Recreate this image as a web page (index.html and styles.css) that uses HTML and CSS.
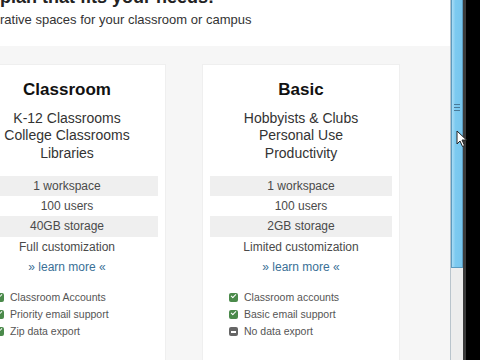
FILE: index.html
```html
<!DOCTYPE html>
<html>
<head>
<meta charset="utf-8">
<link rel="stylesheet" href="styles.css">
</head>
<body>
<div class="page">
  <header class="hero">
    <h1 class="hero-title">plan that fits your needs:</h1>
    <p class="hero-sub">rative spaces for your classroom or campus</p>
  </header>
  <div class="plans">
    <section class="card">
      <h2 class="card-title">Classroom</h2>
      <div class="card-for">K-12 Classrooms<br>College Classrooms<br>Libraries</div>
      <ul class="specs">
        <li class="stripe">1 workspace</li>
        <li>100 users</li>
        <li class="stripe">40GB storage</li>
        <li>Full customization</li>
        <li class="more">» learn more «</li>
      </ul>
      <ul class="feats">
        <li><span class="ck on"></span>Classroom Accounts</li>
        <li><span class="ck on"></span>Priority email support</li>
        <li><span class="ck on"></span>Zip data export</li>
      </ul>
    </section>
    <section class="card">
      <h2 class="card-title">Basic</h2>
      <div class="card-for">Hobbyists &amp; Clubs<br>Personal Use<br>Productivity</div>
      <ul class="specs">
        <li class="stripe">1 workspace</li>
        <li>100 users</li>
        <li class="stripe">2GB storage</li>
        <li>Limited customization</li>
        <li class="more">» learn more «</li>
      </ul>
      <ul class="feats">
        <li><span class="ck on"></span>Classroom accounts</li>
        <li><span class="ck on"></span>Basic email support</li>
        <li><span class="ck off"></span>No data export</li>
      </ul>
    </section>
  </div>
</div>
<div class="scrollbar">
  <div class="track">
    <div class="thumb"><span class="grip"></span></div>
  </div>
  <div class="edge"></div>
  <div class="frame"></div>
</div>
<svg class="cursor" width="12" height="18" viewBox="0 0 12 18"><path d="M1 1 L1 14 L4 11 L6.5 16.5 L8.5 15.5 L6 10 L10.5 10 Z" fill="#fff" stroke="#222" stroke-width="1"/></svg>
</body>
</html>
```
FILE: styles.css
```css
html, body {
  margin: 0;
  padding: 0;
}
body {
  width: 480px;
  height: 360px;
  overflow: hidden;
  display: flex;
  position: relative;
  font-family: "Liberation Sans", Arial, sans-serif;
  background: #000;
}
.page {
  width: 450px;
  flex: none;
  background: #f6f6f6;
  overflow: hidden;
}
.hero {
  background: #fff;
  height: 46px;
  overflow: hidden;
}
.hero-title {
  margin: -14px 0 0 0;
  font-size: 18px;
  line-height: 22px;
  font-weight: bold;
  color: #222;
  white-space: nowrap;
}
.hero-sub {
  margin: 4px 0 0 0;
  font-size: 13px;
  line-height: 16px;
  color: #333;
  white-space: nowrap;
}
.plans {
  display: flex;
  gap: 36px;
  margin: 18px 0 0 -32px;
}
.card {
  width: 196px;
  height: 320px;
  flex: none;
  background: #fff;
  border: 1px solid #efefef;
  box-sizing: content-box;
  padding: 15px 0 0 0;
  text-align: center;
}
.card-title {
  margin: 0;
  font-size: 17px;
  line-height: 20px;
  font-weight: bold;
  color: #111;
}
.card-for {
  margin-top: 10px;
  font-size: 14px;
  line-height: 17.3px;
  color: #333;
}
.specs {
  list-style: none;
  margin: 14px 7px 0 7px;
  padding: 0;
  font-size: 12px;
  line-height: 20.3px;
  color: #4a4a4a;
}
.specs .stripe {
  background: #efefef;
}
.specs .more {
  color: #3a7096;
}
.feats {
  list-style: none;
  margin: 12px 0 0 26px;
  padding: 0;
  text-align: left;
  font-size: 10.5px;
  line-height: 17px;
  color: #555;
}
.feats li {
  display: flex;
  align-items: center;
  gap: 6px;
}
.ck {
  width: 9px;
  height: 9px;
  border-radius: 2px;
  flex: none;
  position: relative;
}
.ck.on {
  background: #4b8a4b;
}
.ck.on::after {
  content: "";
  position: absolute;
  left: 2px;
  top: 1px;
  width: 4px;
  height: 2px;
  border-left: 1.5px solid #fff;
  border-bottom: 1.5px solid #fff;
  transform: rotate(-45deg);
}
.ck.off {
  background: #666;
}
.ck.off::after {
  content: "";
  position: absolute;
  left: 2px;
  top: 4px;
  width: 5px;
  height: 1.5px;
  background: #fff;
}
.scrollbar {
  width: 30px;
  flex: none;
  display: flex;
}
.track {
  width: 12px;
  border-left: 1px solid #b9c4cc;
  background: #ededed;
}
.thumb {
  height: 268px;
  background: linear-gradient(to right, #a9dcf5, #7ccaf0 35%, #78c6ee);
  border: 1px solid #5b9bc0;
  border-top: none;
  box-sizing: border-box;
  display: flex;
  justify-content: center;
  padding-top: 104px;
}
.grip {
  width: 6px;
  height: 7px;
  background: linear-gradient(#4a7a98 0 1px, transparent 1px 3px, #4a7a98 3px 4px, transparent 4px 6px, #4a7a98 6px 7px);
}
.edge {
  width: 3px;
  background: #3a3a3a;
}
.frame {
  flex: 1;
  background: #000;
}
.cursor {
  position: absolute;
  left: 456px;
  top: 130px;
}
```
